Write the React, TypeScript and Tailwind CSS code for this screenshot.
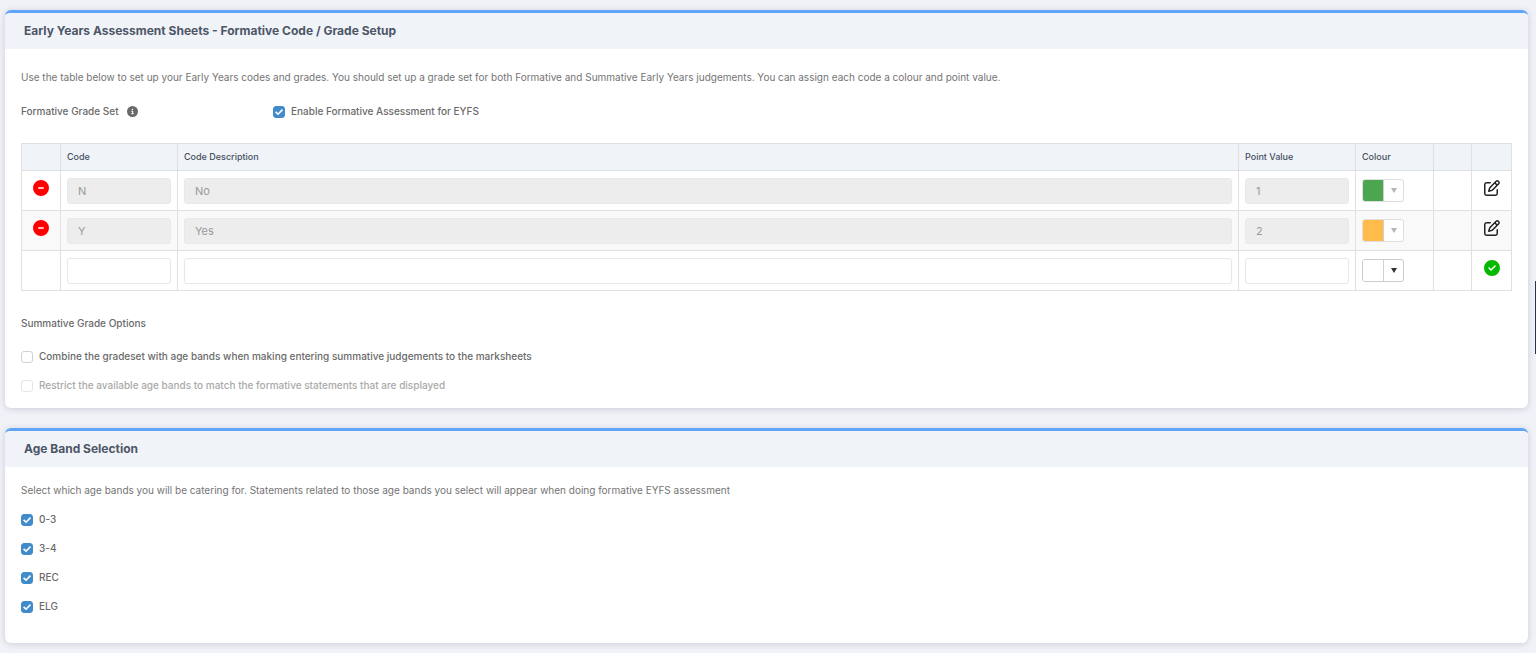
import { useState } from 'react'
import type { ReactNode } from 'react'
import { FaCircleCheck, FaCircleInfo, FaCircleMinus, FaRegPenToSquare } from 'react-icons/fa6'

interface Grade {
  code: string
  description: string
  points: string
  swatch: string
}

const grades: Grade[] = [
  { code: 'N', description: 'No', points: '1', swatch: 'bg-[#4ba64f]' },
  { code: 'Y', description: 'Yes', points: '2', swatch: 'bg-[#ffbc4a]' },
]

const ageBands = ['0-3', '3-4', 'REC', 'ELG']

const cell = 'border border-[#dfe0e2] px-1.5'
const lockedInput =
  'block h-[26px] w-full rounded-[3px] border border-[#e8e9ea] bg-[#ededed] px-2.5 text-[11px] text-[#999]'
const openInput =
  'block h-[26px] w-full rounded-[3px] border border-[#e6e7e9] bg-white px-2.5 text-[11px] text-[#666]'

const Panel = ({ title, children }: { title: string; children: ReactNode }) => (
  <section className="overflow-hidden rounded-md border-t-3 border-[#60a5fa] bg-white shadow-[0_1px_6px_rgba(50,60,90,0.2)]">
    <h2 className="bg-[#f0f4f9] px-[19px] py-2 text-xs leading-5 font-bold text-[#4d5666]">{title}</h2>
    <div className="px-4">{children}</div>
  </section>
)

interface CheckProps {
  id: string
  label: string
  defaultChecked?: boolean
  disabled?: boolean
}

const Check = ({ id, label, defaultChecked, disabled }: CheckProps) => (
  <div className="flex items-center gap-1.5 font-medium">
    <span className="relative mt-0.5 flex size-3">
      <input
        id={id}
        type="checkbox"
        defaultChecked={defaultChecked}
        disabled={disabled}
        className="peer size-3 appearance-none rounded-[3px] border border-[#cfd1d4] bg-white checked:border-[#428bca] checked:bg-[#428bca] disabled:border-[#e4e5e7]"
      />
      <svg
        viewBox="0 0 12 12"
        className="pointer-events-none absolute inset-0 hidden size-3 peer-checked:block"
        fill="none"
        stroke="#fff"
        strokeWidth="1.6"
      >
        <path d="M2.6 5.9 5 8.2l4.5-4.6" />
      </svg>
    </span>
    <label htmlFor={id} className={disabled ? 'text-[#a9a9a9]' : 'text-[#6a6a6a]'}>
      {label}
    </label>
  </div>
)

const ColourPicker = ({ swatch, disabled }: { swatch: string; disabled?: boolean }) => (
  <button
    type="button"
    aria-label="Choose colour"
    disabled={disabled}
    className="flex h-[23px] w-[42px] overflow-hidden rounded-[3px] border border-[#ccc] bg-white disabled:border-[#dedede]"
  >
    <span className={`h-full w-5 ${swatch}`} />
    <span className="flex h-full flex-1 items-center justify-center border-l border-[#d0d0d0]">
      <svg viewBox="0 0 6 5" className={disabled ? 'h-[5px] w-1.5 text-[#b5b5b5]' : 'h-[5px] w-1.5 text-[#333]'}>
        <path d="M0 0h6L3 5z" fill="currentColor" />
      </svg>
    </span>
  </button>
)

const GradeTable = () => {
  const [rows, setRows] = useState(grades)

  const removeRow = (code: string) => setRows((prev) => prev.filter((row) => row.code !== code))

  return (
    <table className="w-full table-fixed border-collapse">
      <colgroup>
        <col className="w-[39px]" />
        <col className="w-[117px]" />
        <col />
        <col className="w-[117px]" />
        <col className="w-[78px]" />
        <col className="w-[38px]" />
        <col className="w-[40px]" />
      </colgroup>
      <thead>
        <tr className="h-[27px] bg-[#f0f4f9] text-left text-[9px] text-[#475060]">
          <th className={cell} />
          <th className={`${cell} font-medium`}>Code</th>
          <th className={`${cell} font-medium`}>Code Description</th>
          <th className={`${cell} font-medium`}>Point Value</th>
          <th className={`${cell} font-medium`}>Colour</th>
          <th className={cell} />
          <th className={cell} />
        </tr>
      </thead>
      <tbody>
        {rows.map((row) => (
          <tr key={row.code} className="h-10 even:bg-[#f9f9f9]">
            <td className={cell}>
              <button
                type="button"
                aria-label="Remove code"
                onClick={() => removeRow(row.code)}
                className="mx-auto mb-1.5 block text-base text-[#f00]"
              >
                <FaCircleMinus />
              </button>
            </td>
            <td className={cell}>
              <input aria-label="Code" disabled defaultValue={row.code} className={lockedInput} />
            </td>
            <td className={cell}>
              <input aria-label="Code Description" disabled defaultValue={row.description} className={lockedInput} />
            </td>
            <td className={cell}>
              <input aria-label="Point Value" disabled defaultValue={row.points} className={lockedInput} />
            </td>
            <td className={cell}>
              <ColourPicker swatch={row.swatch} disabled />
            </td>
            <td className={cell} />
            <td className={cell}>
              <button type="button" aria-label="Edit code" className="mx-auto mb-1.5 block text-base text-[#222]">
                <FaRegPenToSquare />
              </button>
            </td>
          </tr>
        ))}
        {/* Blank row for adding a new code */}
        <tr className="h-10">
          <td className={cell} />
          <td className={cell}>
            <input aria-label="New code" className={openInput} />
          </td>
          <td className={cell}>
            <input aria-label="New code description" className={openInput} />
          </td>
          <td className={cell}>
            <input aria-label="New point value" className={openInput} />
          </td>
          <td className={cell}>
            <ColourPicker swatch="bg-white" />
          </td>
          <td className={cell} />
          <td className={cell}>
            <button type="button" aria-label="Save code" className="mx-auto mb-1.5 block text-base text-[#00b900]">
              <FaCircleCheck />
            </button>
          </td>
        </tr>
      </tbody>
    </table>
  )
}

export default function App() {
  return (
    <div className="min-h-screen bg-[#f0f2f7] font-['Inter',sans-serif] text-[10px] leading-4 text-[#6a6a6a]">
      <main className="flex flex-col gap-5 pt-[10px] pr-2 pb-2 pl-[5px]">
        <Panel title="Early Years Assessment Sheets - Formative Code / Grade Setup">
          <p className="pt-5 text-[#747474]">
            Use the table below to set up your Early Years codes and grades. You should set up a grade set for both
            Formative and Summative Early Years judgements. You can assign each code a colour and point value.
          </p>
          <div className="flex items-center pt-[18px] pb-6">
            <div className="flex w-[252px] items-center gap-2 font-medium">
              Formative Grade Set
              <FaCircleInfo className="text-[11px]" />
            </div>
            <Check id="enable-formative" label="Enable Formative Assessment for EYFS" defaultChecked />
          </div>
          <GradeTable />
          <h3 className="pt-6 font-medium">Summative Grade Options</h3>
          <div className="flex flex-col gap-[13px] pt-[17px] pb-[15px]">
            <Check
              id="combine-bands"
              label="Combine the gradeset with age bands when making entering summative judgements to the marksheets"
            />
            <Check
              id="restrict-bands"
              label="Restrict the available age bands to match the formative statements that are displayed"
              disabled
            />
          </div>
        </Panel>
        <Panel title="Age Band Selection">
          <p className="pt-[15px] text-[#747474]">
            Select which age bands you will be catering for. Statements related to those age bands you select will
            appear when doing formative EYFS assessment
          </p>
          <div className="flex flex-col gap-[13px] pt-[13px] pb-[29px]">
            {ageBands.map((band) => (
              <Check key={band} id={`band-${band}`} label={band} defaultChecked />
            ))}
          </div>
        </Panel>
      </main>
      {/* Side tab handle on the window edge */}
      <div className="fixed top-[281px] right-0 h-[73px] w-px bg-[#2b3350]" />
    </div>
  )
}
